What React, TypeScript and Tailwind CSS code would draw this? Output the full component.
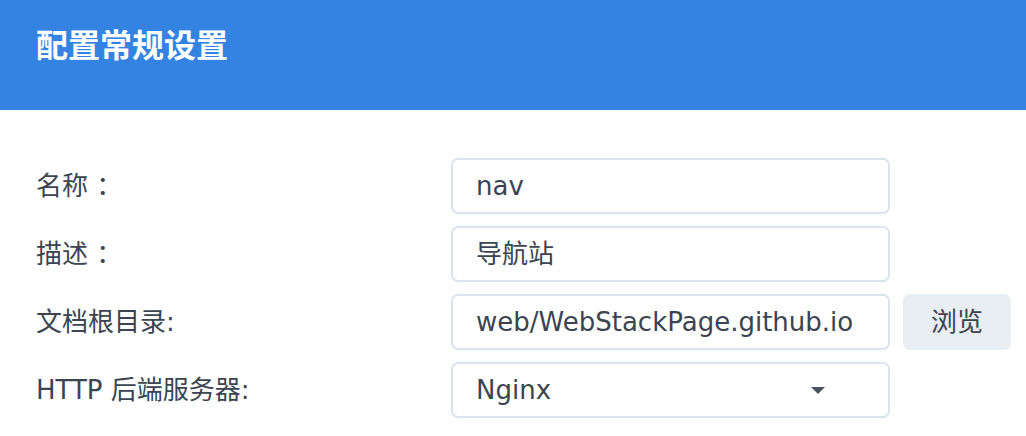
import { useState } from 'react';

const font = { fontFamily: '"DejaVu Sans", "Noto Sans CJK SC", sans-serif' };

function Field({ label, children }: { label: string; children: React.ReactNode }) {
  return (
    <div className="flex items-center h-[56px]">
      <div className="w-[415px] shrink-0 text-[26px] text-[#3b4450]">{label}</div>
      {children}
    </div>
  );
}

function TextBox({ value }: { value: string }) {
  return (
    <div className="w-[439px] h-[56px] shrink-0 flex items-center border-2 border-[#dbe3eb] rounded-[7px] px-[23px] text-[26px] text-[#3b4450] bg-white">
      {value}
    </div>
  );
}

export default function App() {
  const [server] = useState('Nginx');

  return (
    <div className="w-[1026px] h-[436px] bg-white overflow-hidden" style={font}>
      <div className="h-[110px] bg-[#3483e2] px-[36px] pt-[26px]">
        <h1 className="text-[32px] leading-[40px] font-bold text-white">配置常规设置</h1>
      </div>

      <div className="pl-[36px] pt-[48px] flex flex-col gap-[12px]">
        <Field label="名称 ：">
          <TextBox value="nav" />
        </Field>
        <Field label="描述 ：">
          <TextBox value="导航站" />
        </Field>
        <Field label="文档根目录:">
          <TextBox value="web/WebStackPage.github.io" />
          <button className="ml-[13px] w-[108px] h-[56px] shrink-0 rounded-[7px] bg-[#e9eef2] text-[26px] text-[#3b4450]">
            浏览
          </button>
        </Field>
        <Field label="HTTP 后端服务器:">
          <div className="w-[439px] h-[56px] shrink-0 flex items-center justify-between border-2 border-[#dbe3eb] rounded-[7px] pl-[23px] pr-[63px] text-[26px] text-[#3b4450] bg-white">
            <span>{server}</span>
            <svg width="14" height="7" viewBox="0 0 14 7">
              <path d="M0 0h14L7 7z" fill="#4a5360" />
            </svg>
          </div>
        </Field>
      </div>
    </div>
  );
}
